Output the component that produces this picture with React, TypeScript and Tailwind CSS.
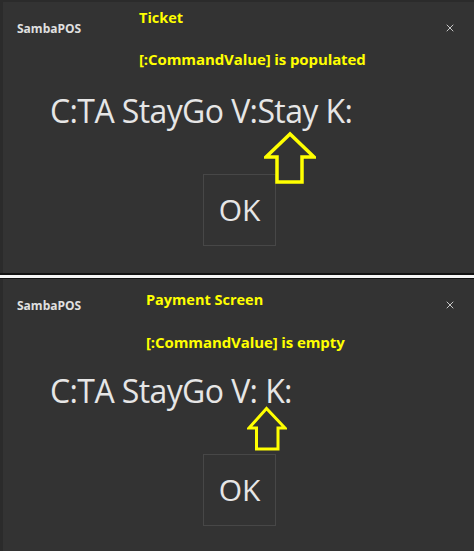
import { X } from 'lucide-react';

type DialogProps = {
  title: string;
  note: string;
  message: string;
  noteLeft: string;
  noteTop: string;
  noteGap: string;
  textTop: string;
  topBorder?: boolean;
  arrow: 'big' | 'small';
};

function UpArrow({ size }: { size: 'big' | 'small' }) {
  if (size === 'big') {
    return (
      <svg
        className="absolute left-[261px] top-[129px]"
        width="52"
        height="54"
        viewBox="0 0 52 54"
        fill="none"
      >
        <path
          d="M26 3 L2 26 L13 26 L13 51 L38 51 L38 26 L50 26 Z"
          stroke="#ffff00"
          strokeWidth="3.5"
          strokeLinejoin="miter"
        />
      </svg>
    );
  }
  return (
    <svg
      className="absolute left-[244px] top-[127px]"
      width="40"
      height="46"
      viewBox="0 0 40 46"
      fill="none"
    >
      <path
        d="M19.5 2.5 L2 22 L9.5 22 L9.5 43 L31 43 L31 22 L38 22 Z"
        stroke="#ffff00"
        strokeWidth="3"
        strokeLinejoin="miter"
      />
    </svg>
  );
}

function Dialog({ title, note, message, noteLeft, noteTop, noteGap, textTop, topBorder, arrow }: DialogProps) {
  return (
    <section
      className={`relative h-[273px] bg-[#333333] border-l-[3px] border-[#2b2b2b] text-[#e6e6e6] ${
        topBorder ? 'border-t-2' : ''
      }`}
      style={{ fontFamily: '"Open Sans", "Noto Sans", sans-serif' }}
    >
      {/* Title bar */}
      <header className="flex items-start">
        <div className={`${noteLeft} pl-[14px] pt-[19px] text-[12px] leading-[16px] font-bold text-[#e0e0e0]`}>
          SambaPOS
        </div>
        <div className={`${noteTop} text-[#ffff00] font-bold leading-[18px]`}>
          <div className="text-[14.5px]">{title}</div>
          <div className={`${noteGap} text-[15px] tracking-[-0.1px]`}>{note}</div>
        </div>
        <div className="ml-auto pr-[18px] pt-[20px] text-[#d8d8d8]">
          <X size={12} strokeWidth={1.8} />
        </div>
      </header>

      {/* Message */}
      <p className={`${textTop} pl-[47px] text-[32px] leading-[40px] tracking-[-0.6px] whitespace-nowrap`}>
        {message}
      </p>

      {/* Button */}
      <div className="flex">
        <button className="ml-[200px] mt-[43px] w-[73px] h-[72px] border border-[#474747] bg-[#333333] text-[30px] leading-none text-[#e6e6e6] flex items-center justify-center">
          OK
        </button>
      </div>

      <UpArrow size={arrow} />
    </section>
  );
}

export default function App() {
  return (
    <div className="w-[474px] h-[551px] bg-[#333333] overflow-hidden">
      <Dialog
        topBorder
        title="Ticket"
        note="[:CommandValue] is populated"
        message="C:TA StayGo V:Stay K:"
        noteLeft="w-[136px]"
        noteTop="pt-[7px]"
        noteGap="mt-[23px]"
        textTop="mt-[23px]"
        arrow="big"
      />
      <div className="h-[2px] bg-[#111111]" />
      <div className="h-[3px] bg-[#f4f4f4]" />
      <div className="h-[1px] bg-[#111111]" />
      <Dialog
        title="Payment Screen"
        note="[:CommandValue] is empty"
        message="C:TA StayGo V: K:"
        noteLeft="w-[143px]"
        noteTop="pt-[12px]"
        noteGap="mt-[24px]"
        textTop="mt-[20px]"
        arrow="small"
      />
    </div>
  );
}
